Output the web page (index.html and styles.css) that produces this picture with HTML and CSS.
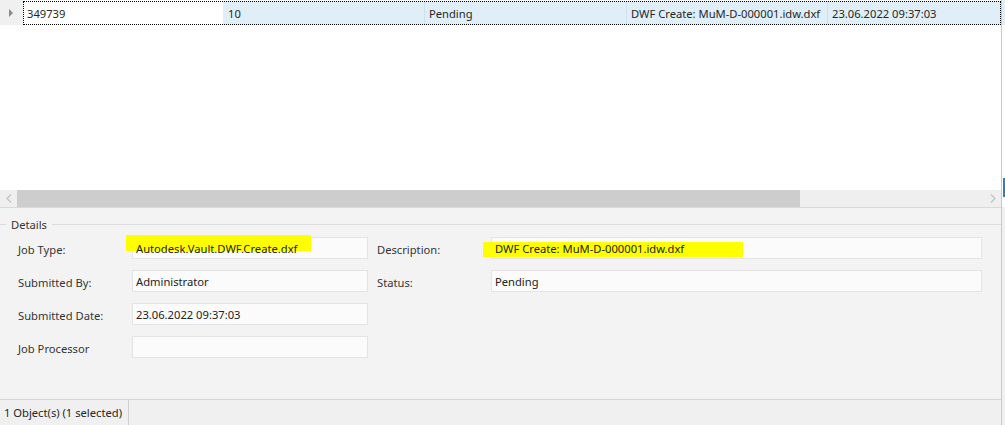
FILE: index.html
```html
<!DOCTYPE html>
<html lang="en">
<head>
  <meta charset="UTF-8" />
  <title>Job Queue</title>
  <link rel="stylesheet" href="styles.css">
</head>
<body>
  <div class="window">
    <div class="main">
      <div class="grid">
        <div class="row">
          <div class="rowhead"><span class="arrow"></span></div>
          <div class="cells">
            <div class="cell first">349739</div>
            <div class="cell c2">10</div>
            <div class="cell c3">Pending</div>
            <div class="cell c4">DWF Create: MuM-D-000001.idw.dxf</div>
            <div class="cell c5">23.06.2022 09:37:03</div>
          </div>
        </div>
      </div>

      <div class="hscroll">
        <div class="sb-btn">
          <svg width="6" height="9" viewBox="0 0 6 9"><path d="M5 0.5 L1 4.5 L5 8.5" fill="none" stroke="#c2c2c2" stroke-width="1.2"/></svg>
        </div>
        <div class="sb-track"><div class="sb-thumb"></div></div>
        <div class="sb-btn">
          <svg width="6" height="9" viewBox="0 0 6 9"><path d="M1 0.5 L5 4.5 L1 8.5" fill="none" stroke="#c2c2c2" stroke-width="1.2"/></svg>
        </div>
      </div>

      <div class="details">
        <div class="group-title"><span>Details</span></div>
        <div class="form">
          <div class="label">Job Type:</div>
          <div class="field">
            <span class="mark mark-type"></span>
            <span class="value">Autodesk.Vault.DWF.Create.dxf</span>
          </div>
          <div class="label label-right">Description:</div>
          <div class="field">
            <span class="mark mark-desc"></span>
            <span class="value">DWF Create: MuM-D-000001.idw.dxf</span>
          </div>

          <div class="label">Submitted By:</div>
          <div class="field"><span class="value">Administrator</span></div>
          <div class="label label-right">Status:</div>
          <div class="field"><span class="value">Pending</span></div>

          <div class="label">Submitted Date:</div>
          <div class="field"><span class="value">23.06.2022 09:37:03</span></div>
          <div></div>
          <div></div>

          <div class="label">Job Processor</div>
          <div class="field"></div>
        </div>
      </div>

      <div class="statusbar">
        <div class="status-cell">1 Object(s) (1 selected)</div>
      </div>
    </div>
    <div class="edge"><span class="edge-mark"></span></div>
  </div>
</body>
</html>
```

FILE: styles.css
```css
body {
  margin: 0;
  font-family: 'Noto Sans', 'Segoe UI', sans-serif;
  font-size: 11.2px;
  color: #262626;
  background: #fff;
}
.window {
  display: flex;
  width: 1005px;
  height: 425px;
  overflow: hidden;
}
.main {
  width: 1001px;
  display: flex;
  flex-direction: column;
}
.edge {
  position: relative;
  width: 4px;
  box-sizing: border-box;
  border-left: 1px solid #c9c9c9;
  background: linear-gradient(to bottom, #e0eef8 0, #e0eef8 25px, #fff 25px, #fff 207px, #f0f0f0 207px);
}
.edge-mark {
  position: absolute;
  right: 0;
  top: 178px;
  width: 2px;
  height: 19px;
  background: #1a86d0;
}

/* grid */
.grid {
  height: 190px;
  background: #fff;
}
.row {
  display: flex;
  align-items: flex-end;
  height: 25px;
}
.rowhead {
  width: 23px;
  height: 25px;
  box-sizing: border-box;
  background: #f0f0f0;
  display: flex;
  align-items: center;
  padding-left: 9px;
}
.arrow {
  width: 0;
  height: 0;
  border-left: 4px solid #8a8a8a;
  border-top: 4px solid transparent;
  border-bottom: 4px solid transparent;
}
.cells {
  display: flex;
  flex: 1;
  height: 24px;
  outline: 1px dotted #000;
  outline-offset: -1px;
}
.cell {
  display: flex;
  align-items: center;
  box-sizing: border-box;
  padding-left: 4px;
  white-space: nowrap;
  overflow: hidden;
  background: #e0eef8;
  border-right: 1px solid #cfe1ee;
}
.cell.first {
  width: 200px;
  background: #fff;
  border-right: none;
}
.cell.c2 { width: 202px; padding-left: 5px; }
.cell.c3 { width: 202px; }
.cell.c4 { width: 201px; }
.cell.c5 { flex: 1; border-right: none; }

/* horizontal scrollbar */
.hscroll {
  display: flex;
  height: 17px;
  background: #efefef;
}
.sb-btn {
  width: 17px;
  display: flex;
  align-items: center;
  justify-content: center;
}
.sb-track {
  flex: 1;
}
.sb-thumb {
  width: 783px;
  height: 100%;
  background: #cdcdcd;
}

/* details panel */
.details {
  flex: 1;
  background: #f3f3f3;
  border-top: 1px solid #d9d9d9;
  padding-top: 8px;
}
.group-title {
  display: flex;
  align-items: center;
  height: 16px;
  color: #333;
}
.group-title::before,
.group-title::after {
  content: "";
  border-top: 1px solid #dcdcdc;
}
.group-title::before {
  width: 6px;
}
.group-title::after {
  flex: 1;
}
.group-title span {
  padding: 0 5px;
}
.form {
  display: grid;
  grid-template-columns: 114px 236px 123px 491px;
  grid-auto-rows: 22px;
  row-gap: 11px;
  margin-top: 5px;
  padding-left: 18px;
}
.label {
  display: flex;
  align-items: center;
  padding-top: 2px;
  color: #333;
}
.label-right {
  padding-left: 9px;
}
.field {
  position: relative;
  display: flex;
  align-items: center;
  box-sizing: border-box;
  padding-left: 3px;
  background: #fbfbfb;
  border: 1px solid #e4e4e4;
  white-space: nowrap;
}
.value {
  position: relative;
  color: #222;
}
.mark {
  position: absolute;
  background: #ffff00;
}
.mark-type {
  left: -7px;
  top: -3px;
  width: 185px;
  height: 16px;
}
.mark-desc {
  left: -9px;
  top: 4px;
  width: 260px;
  height: 15px;
}

/* status bar */
.statusbar {
  display: flex;
  height: 26px;
  box-sizing: border-box;
  background: #f0f0f0;
  border-top: 1px solid #d4d4d4;
}
.status-cell {
  display: flex;
  align-items: center;
  width: 129px;
  box-sizing: border-box;
  padding-left: 4px;
  border-right: 1px solid #d0d0d0;
  color: #262626;
}
```
